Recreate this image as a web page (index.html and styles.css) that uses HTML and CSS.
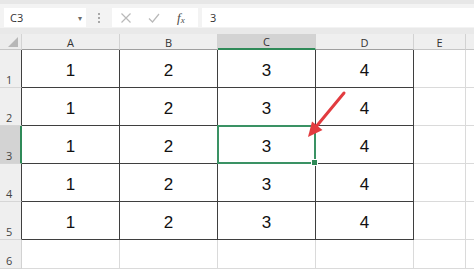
FILE: index.html
```html
<!DOCTYPE html>
<html>
<head>
<meta charset="utf-8">
<link rel="stylesheet" href="styles.css">
</head>
<body>
<div class="app">
  <div class="topband"></div>
  <div class="toolbar">
    <div class="namebox"><span class="ref">C3</span><span class="caret">&#9662;</span></div>
    <div class="dots"><i></i><i></i><i></i></div>
    <div class="btns">
      <svg class="ico" width="12" height="12" viewBox="0 0 12 12"><path d="M1.5 1.5 L10.5 10.5 M10.5 1.5 L1.5 10.5" stroke="#b9b9b9" stroke-width="1.2" fill="none"/></svg>
      <svg class="ico" width="12" height="12" viewBox="0 0 12 12"><path d="M1 6.5 L4.5 10 L11 2" stroke="#b9b9b9" stroke-width="1.2" fill="none"/></svg>
      <span class="fx">f<sub>x</sub></span>
    </div>
    <div class="formula">3</div>
  </div>
  <div class="spacer"></div>
  <div class="sheet">
    <div class="corner"><span class="tri"></span></div>
    <div class="ch dk">A</div>
    <div class="ch dk">B</div>
    <div class="ch dk chsel">C</div>
    <div class="ch dk">D</div>
    <div class="ch">E</div>
    <div class="ch last"></div>

    <div class="rh dk">1</div>
    <div class="c d">1</div><div class="c d">2</div><div class="c d">3</div><div class="c d">4</div><div class="c"></div><div class="c last"></div>

    <div class="rh dk">2</div>
    <div class="c d">1</div><div class="c d">2</div><div class="c d">3</div><div class="c d">4</div><div class="c"></div><div class="c last"></div>

    <div class="rh rhsel">3</div>
    <div class="c d">1</div><div class="c d">2</div><div class="c d sel">3</div><div class="c d">4</div><div class="c"></div><div class="c last"></div>

    <div class="rh dk">4</div>
    <div class="c d">1</div><div class="c d">2</div><div class="c d">3</div><div class="c d">4</div><div class="c"></div><div class="c last"></div>

    <div class="rh dk">5</div>
    <div class="c d">1</div><div class="c d">2</div><div class="c d">3</div><div class="c d">4</div><div class="c"></div><div class="c last"></div>

    <div class="rh">6</div>
    <div class="c"></div><div class="c"></div><div class="c"></div><div class="c"></div><div class="c"></div><div class="c last"></div>
  </div>
  <svg class="arrow" width="474" height="269" viewBox="0 0 474 269">
    <line x1="344" y1="93" x2="315" y2="128" stroke="#e23b3f" stroke-width="3" stroke-linecap="round"/>
    <polygon points="308,137 312,121.5 322.5,130" fill="#e23b3f"/>
  </svg>
</div>
</body>
</html>
```

FILE: styles.css
```css
* { box-sizing: border-box; }
html, body { margin: 0; padding: 0; }
body {
  width: 474px;
  height: 269px;
  overflow: hidden;
  background: #ffffff;
  font-family: "Open Sans", "Noto Sans", "Liberation Sans", sans-serif;
}
.app {
  position: relative;
  width: 474px;
  height: 269px;
  display: flex;
  flex-direction: column;
  overflow: hidden;
}
.topband {
  height: 4px;
  background: #e7e7e7;
  flex: none;
}
.toolbar {
  height: 24px;
  flex: none;
  background: #f3f3f3;
  display: flex;
  align-items: flex-start;
  padding: 4px 0 0 4px;
}
.namebox {
  width: 82px;
  height: 19px;
  background: #fff;
  display: flex;
  align-items: center;
  justify-content: space-between;
  padding: 0 4px 0 6px;
  font-size: 11px;
  color: #333;
}
.caret {
  font-size: 8px;
  color: #6b6b6b;
}
.dots {
  width: 26px;
  height: 19px;
  display: flex;
  flex-direction: column;
  align-items: center;
  justify-content: center;
  gap: 2px;
}
.dots i {
  display: block;
  width: 2px;
  height: 2px;
  background: #a8a8a8;
}
.btns {
  width: 86px;
  height: 19px;
  background: #fff;
  display: flex;
  align-items: center;
  padding-left: 8px;
}
.btns .ico { margin-right: 16px; }
.btns .ico + .ico { margin-right: 17px; }
.fx {
  font-family: "Liberation Serif", "DejaVu Serif", serif;
  font-style: italic;
  font-size: 13px;
  color: #4a4a4a;
  line-height: 1;
}
.fx sub {
  font-size: 9px;
  vertical-align: -1px;
}
.formula {
  flex: 1;
  height: 19px;
  margin-left: 4px;
  background: #fff;
  font-size: 11px;
  color: #333;
  padding-left: 8px;
  display: flex;
  align-items: center;
}
.spacer {
  height: 6px;
  flex: none;
  background: #e9e9e9;
}
.sheet {
  flex: 1;
  display: grid;
  grid-template-columns: 22px 98px 98px 98px 98px 52px 1fr;
  grid-template-rows: 16px 38px 38px 38px 38px 38px 1fr;
  background: #fff;
}
.corner {
  background: #ececec;
  border-right: 1px solid #d4d4d4;
  border-bottom: 1px solid #c6c6c6;
  position: relative;
}
.tri {
  position: absolute;
  right: 3px;
  bottom: 2px;
  width: 0;
  height: 0;
  border-left: 10px solid transparent;
  border-bottom: 10px solid #b7b7b7;
}
.ch {
  background: #efefef;
  border-right: 1px solid #d2d2d2;
  border-bottom: 1px solid #c6c6c6;
  font-size: 11px;
  color: #333;
  display: flex;
  align-items: center;
  justify-content: center;
  line-height: 1;
  padding-top: 1px;
}
.ch.dk { border-bottom-color: #9f9f9f; }
.ch.chsel {
  background: #d3d3d3;
  border-bottom: 2px solid #2f8a58;
}
.rh {
  background: #efefef;
  border-right: 1px solid #d2d2d2;
  border-bottom: 1px solid #d6d6d6;
  font-size: 11px;
  color: #444;
  display: flex;
  align-items: flex-end;
  padding: 0 0 1px 6px;
  line-height: 1.2;
}
.rh.dk { border-right-color: #3f3f3f; }
.rh.rhsel {
  background: #d3d3d3;
  border-right: 2px solid #2f8a58;
}
.c {
  border-right: 1px solid #dadada;
  border-bottom: 1px solid #dadada;
  font-family: "Liberation Sans", Arial, sans-serif;
  font-size: 17px;
  color: #111;
  display: flex;
  align-items: center;
  justify-content: center;
  padding-top: 4px;
}
.c.last, .ch.last { border-right: none; }
.c.d {
  border-right-color: #3f3f3f;
  border-bottom-color: #3f3f3f;
}
.c.sel {
  position: relative;
  z-index: 1;
}
.c.sel::before {
  content: "";
  position: absolute;
  left: -1px;
  top: -1px;
  right: -1px;
  bottom: -1px;
  border: 2px solid #3a9264;
}
.c.sel::after {
  content: "";
  position: absolute;
  right: -3px;
  bottom: -3px;
  width: 5px;
  height: 5px;
  background: #2f8a58;
  border: 1px solid #fff;
}
.arrow {
  position: absolute;
  left: 0;
  top: 0;
  z-index: 2;
  pointer-events: none;
}
```
